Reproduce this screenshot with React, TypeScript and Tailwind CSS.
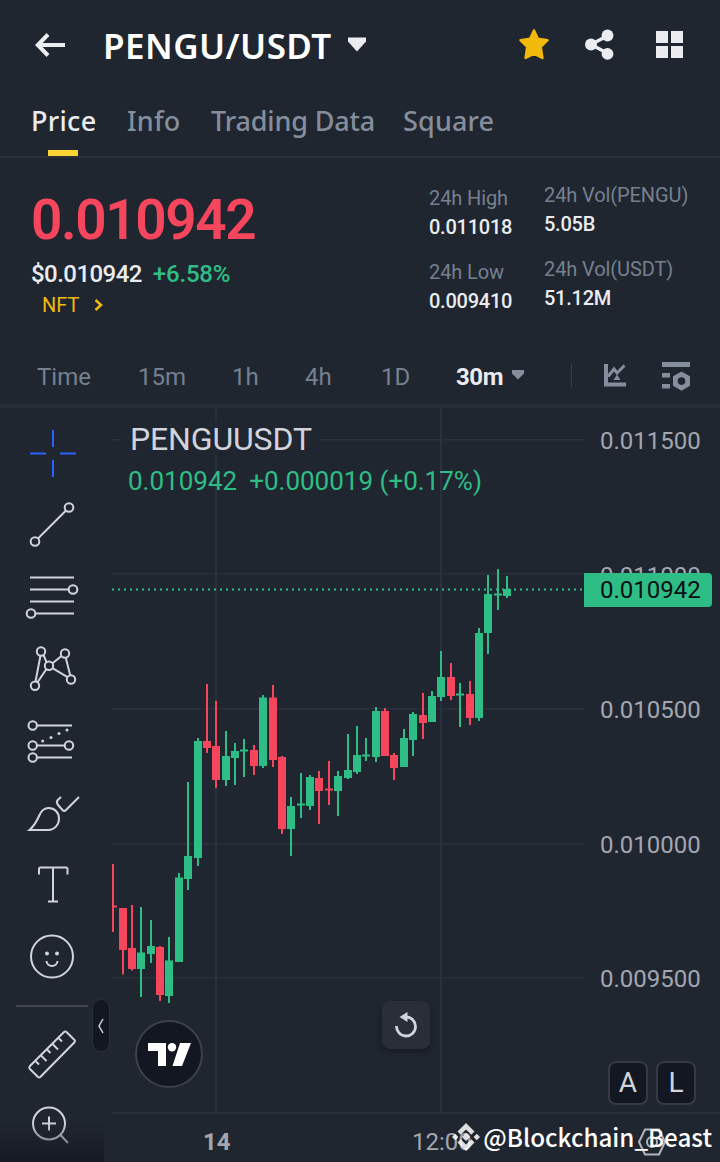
import clsx from "clsx";

interface ICandle {
  x: number;
  high: number;
  low: number;
  top: number;
  bottom: number;
  up: boolean;
}

const GREEN = "#2ebd85";
const RED = "#f6465d";

// x, high, low, body top, body bottom, up
const rawCandles: [number, number, number, number, number, boolean][] = [
  [113, 864, 932, 905.5, 907.5, false],
  [123, 908, 974.5, 908, 950, false],
  [132, 905, 970.5, 948, 969, false],
  [141, 907, 997, 952.5, 969, true],
  [151, 920, 963, 946, 954, true],
  [160, 946, 1001, 947, 995, false],
  [169, 937, 1003, 960.5, 996, true],
  [179, 873, 962, 877.5, 962, true],
  [188, 782, 890, 856, 879, true],
  [198, 738, 866, 741, 858, true],
  [207, 684, 753, 741, 748, false],
  [216, 701, 788, 746, 780, false],
  [226, 731, 786, 756, 780, true],
  [235, 743, 785, 751, 758, true],
  [244, 739, 777, 749.5, 751.5, true],
  [254, 745, 775, 750, 766, false],
  [263, 695, 768, 697.5, 766, true],
  [273, 685, 767, 697.5, 760, false],
  [282, 756, 834, 757, 829, false],
  [291, 797, 856, 806, 829, true],
  [301, 773, 818, 803.5, 805.5, true],
  [310, 775, 810, 777, 806, true],
  [319, 771, 824, 778, 791, false],
  [329, 761, 805, 788.5, 790.5, false],
  [338, 771, 816, 776, 791, true],
  [348, 734, 779, 770, 778, true],
  [357, 726, 774, 755, 772, true],
  [366, 738, 761, 754.5, 756.5, true],
  [376, 707, 762, 711, 757, true],
  [385, 708, 756, 711, 756, false],
  [394, 753, 780, 755, 768, false],
  [404, 729, 767, 738, 767, true],
  [413, 712, 756, 714, 740, true],
  [423, 693, 739, 715, 723, false],
  [432, 691, 722, 696, 722, true],
  [441, 651, 701, 677, 697, true],
  [451, 663, 700, 677, 696, false],
  [460, 683, 727, 693.5, 695.5, true],
  [470, 681, 725, 694, 718, false],
  [479, 628, 721, 633, 718, true],
  [488, 575, 654, 594, 633, true],
  [498, 569, 610, 593.5, 595.5, true],
  [507, 576, 598, 589, 596, true],
];

const candles: ICandle[] = rawCandles.map(
  ([x, high, low, top, bottom, up]) => ({ x, high, low, top, bottom, up })
);

const intervals = [
  { label: "Time", style: "w-[101px]" },
  { label: "15m", style: "w-[94px]" },
  { label: "1h", style: "w-[73px]" },
  { label: "4h", style: "w-[76px]" },
  { label: "1D", style: "w-[75px]" },
];

const Header = () => (
  <header className="flex h-[88px] items-center pl-[35px] pr-[35px]">
    <svg className="mt-px h-6 w-[30px]" viewBox="0 0 30 24" fill="none">
      <path
        d="M13 1.5 2.8 12 13 22.500M2.500 12H30"
        stroke="#eaecef"
        strokeWidth="4"
      />
    </svg>
    <h1 className="ml-[38px] w-[230px] whitespace-nowrap pt-0.5 font-['Noto_Sans'] text-[35px] font-semibold leading-none tracking-[0.450px] text-white">
      PENGU/USDT
    </h1>
    <svg className="ml-[14px] h-[15px] w-[20px]" viewBox="0 0 20 15">
      <path d="M1 0.500H19V4.500L10 14.500 1 4.500Z" fill="#eaecef" />
    </svg>
    <svg className="ml-[151px] h-8 w-8" viewBox="0 0 32 32">
      <path
        d="M16 2.500 19.900 10.800 29.500 12.200 22.700 18.800 24.400 30 16 25.600 7.600 30 9.300 18.800 2.500 12.200 12.100 10.800Z"
        fill="#f0b90b"
        stroke="#f0b90b"
        strokeWidth="2.500"
        strokeLinejoin="round"
      />
    </svg>
    <svg className="ml-[34px] h-[31px] w-[31px]" viewBox="0 0 31 31">
      <path d="M24 6.500 7 15.500 24 24.500" fill="none" stroke="#eaecef" strokeWidth="3.500" />
      <circle cx="23.500" cy="6.500" r="5.900" fill="#eaecef" />
      <circle cx="7" cy="15.500" r="6" fill="#eaecef" />
      <circle cx="23.500" cy="24.800" r="5.900" fill="#eaecef" />
    </svg>
    <div className="ml-[41px] grid w-[27px] shrink-0 grid-cols-2 gap-[3px]">
      <span className="h-3 bg-[#eaecef]" />
      <span className="h-3 bg-[#eaecef]" />
      <span className="h-3 bg-[#eaecef]" />
      <span className="h-3 bg-[#eaecef]" />
    </div>
  </header>
);

const Tabs = () => (
  <nav className="flex h-[70px] whitespace-nowrap border-b-2 border-[#2b303a] pl-[31px] font-['Noto_Sans'] text-[27px] font-medium leading-none text-[#848e9c]">
    <div className="flex w-[96px] flex-col">
      <span className="h-[62px] pt-[19px] tracking-[0.300px] text-[#eaecef]">Price</span>
      <span className="ml-[17px] h-[6px] w-[30px] bg-[#fcd535]" />
    </div>
    <span className="w-[84px] pt-[19px] tracking-[0.200px]">Info</span>
    <span className="w-[192px] pt-[19px] tracking-[-0.150px]">Trading Data</span>
    <span className="pt-[19px] tracking-[0.150px]">Square</span>
  </nav>
);

const Stat = ({ label, value }: { label: string; value: string }) => (
  <div className="flex h-[74px] flex-col gap-[9px] whitespace-nowrap leading-5">
    <span className="tracking-[-0.100px] text-[#76808f]">{label}</span>
    <span className="font-medium tracking-[-0.250px] text-[#eaecef]">{value}</span>
  </div>
);

const Ticker = () => (
  <section className="flex h-[188px] font-[Roboto]">
    <div className="w-[429px] pl-[31px] pt-[34px]">
      <div className="h-[56px] text-[55px] font-semibold leading-[56px] tracking-[-1.400px] text-[#f6465d]">
        0.010942
      </div>
      <div className="mt-[12px] flex gap-[11px] text-2xl font-medium leading-[28px] tracking-[-0.550px]">
        <span className="text-[#eaecef]">$0.010942</span>
        <span className="tracking-[-0.200px] text-[#2ebd85]">+6.58%</span>
      </div>
      <div className="ml-[11px] mt-[7px] flex items-center gap-[15px] text-xl leading-5 text-[#f0b90b]">
        NFT
        <svg className="h-3 w-[9px]" viewBox="0 0 9 12" fill="none">
          <path d="M1.500 1 7 6 1.500 11" stroke="#f0b90b" strokeWidth="2.500" />
        </svg>
      </div>
    </div>
    <div className="w-[115px] pt-[30px] text-xl">
      <Stat label="24h High" value="0.011018" />
      <Stat label="24h Low" value="0.009410" />
    </div>
    <div className="pt-[27px] text-xl">
      <Stat label="24h Vol(PENGU)" value="5.05B" />
      <Stat label="24h Vol(USDT)" value="51.12M" />
    </div>
  </section>
);

const Intervals = () => (
  <section className="flex h-[62px] items-center border-b-4 border-[#272e39] pl-[37px] pt-[3px] font-[Roboto] text-2xl text-[#76808f]">
    {intervals.map((item) => (
      <span key={item.label} className={item.style}>
        {item.label}
      </span>
    ))}
    <span className="w-[47px] font-bold tracking-[-0.400px] text-[#eaecef]">30m</span>
    <svg className="-mt-1 ml-[9px] h-[10px] w-3" viewBox="0 0 12 10">
      <path d="M0 0H12V3.500L6 9.500 0 3.500Z" fill="#848e9c" />
    </svg>
    <span className="-mt-[3px] ml-[47px] h-6 w-px bg-[#363d49]" />
    <svg className="-mt-[3px] ml-8 h-[23px] w-[22px]" viewBox="0 0 22 23" fill="none">
      <path d="M2 0V20.500H22" stroke="#848e9c" strokeWidth="4" />
      <path d="M4 12.500 10 5 13 9 20.500 1.500" stroke="#848e9c" strokeWidth="3" />
      <path d="M13 10.500 16.500 16H9.500Z" fill="#848e9c" />
    </svg>
    <svg className="-mt-[1px] ml-[36px] h-[29px] w-[28px]" viewBox="0 0 28 29" fill="#848e9c">
      <path d="M0 0H28V5H0ZM0 11H8V15.500H0ZM0 22H8V26.500H0Z" />
      <path
        fillRule="evenodd"
        d="M19.500 9.500 28 14.300V23.800L19.500 28.700 11 23.800V14.300ZM19.500 15.300A3.800 3.800 0 1 0 19.500 22.900 3.800 3.800 0 1 0 19.500 15.300Z"
      />
    </svg>
  </section>
);

const Tool = ({ children }: { children: React.ReactNode }) => (
  <div className="flex h-[72px] items-center">
    <svg
      className="h-14 w-14"
      viewBox="0 0 56 56"
      fill="none"
      stroke="#d1d4dc"
      strokeWidth="2"
    >
      {children}
    </svg>
  </div>
);

const Toolbar = () => (
  <aside className="relative w-[112px] pl-6 pt-[9px]">
    <Tool>
      <path
        d="M29 5V22M29 35V52M6 28.500H22M36 28.500H52"
        stroke="#2962ff"
      />
    </Tool>
    <Tool>
      <path d="M14 41.500 42 13.500" />
      <circle cx="11" cy="44.500" r="4.300" />
      <circle cx="45" cy="10.500" r="4.300" />
    </Tool>
    <Tool>
      <path d="M6 8.500H50M6 20.500H45M6 32.500H50M11 44.500H50" />
      <circle cx="49" cy="20.500" r="4.300" />
      <circle cx="7" cy="44.500" r="4.300" />
    </Tool>
    <Tool>
      <path d="M16.500 14.500 11.500 40.500M19.500 14 22.500 21.200M13.500 41.200 22.500 28M28.500 22.200 37.500 15M28.500 27.200 43.500 36.200M41.700 16.500 46.300 34.500" />
      <circle cx="17" cy="10.500" r="4.200" />
      <circle cx="41" cy="12.500" r="4.200" />
      <circle cx="25" cy="24.700" r="4.200" />
      <circle cx="11" cy="44.700" r="4.200" />
      <circle cx="47" cy="38.500" r="4.200" />
    </Tool>
    <Tool>
      <path d="M13 12.500H48M13 32.500H41M13 44.500H48" />
      <circle cx="8.700" cy="12.500" r="4.200" />
      <circle cx="8.700" cy="32.500" r="4.200" />
      <circle cx="45" cy="32.500" r="4.200" />
      <circle cx="8.700" cy="44.500" r="4.200" />
      <g fill="#d1d4dc" stroke="none">
        <circle cx="18.700" cy="28" r="1.500" />
        <circle cx="27" cy="24.500" r="1.500" />
        <circle cx="35" cy="20.500" r="1.500" />
        <circle cx="43" cy="17" r="1.500" />
      </g>
    </Tool>
    <Tool>
      <path d="M5.500 45C10 41 13 36 15.500 30 17.500 25.500 20.500 23 24.500 23 30.500 23 35 27.500 35 33.500 35 40 30.500 45 24 45Z" />
      <path d="M37 12 34 14.800Q31.800 17 34 20L38.500 25Q40.200 26.700 42 25L55 12" />
    </Tool>
    <Tool>
      <path d="M15 17.500V12Q15 10.500 16.500 10.500H42Q43.500 10.500 43.500 12V17.500M29 10.500V44.500M24 44.500H34" />
    </Tool>
    <Tool>
      <circle cx="28" cy="27.500" r="21" />
      <path d="M22.500 32C23 38.500 33 38.500 33.500 32" />
      <circle cx="23" cy="24.500" r="2" fill="#d1d4dc" stroke="none" />
      <circle cx="33" cy="24.500" r="2" fill="#d1d4dc" stroke="none" />
    </Tool>
    <div className="-ml-2 mb-[11px] mt-[12px] h-0.5 w-[72px] bg-[#434651]" />
    <Tool>
      <path
        d="M42.500 6 50.500 14Q51.500 15.200 50.500 16.300L16.300 51Q15.200 52 14 51L5.700 42.700Q4.700 41.500 5.700 40.300L40 6Q41.300 5 42.500 6Z"
      />
      <path d="M11.500 35 15 38.500M17 29.500 22.500 35M23 23.500 26.500 27M28.500 18 34 23.500M34.500 12 38 15.500" />
    </Tool>
    <Tool>
      <circle cx="25" cy="25.500" r="16" />
      <path d="M25 18.500V32.500M18 25.500H32M36.500 37 44 45" />
    </Tool>
    <div className="absolute bottom-0 left-0 h-10 w-[104px] bg-linear-to-b from-transparent to-[#131722]/80" />
    <div className="absolute left-[92px] top-[591px] z-10 flex h-[53px] w-[18px] items-center justify-center rounded-full border border-[#2a2e39] bg-[#131722]">
      <svg className="h-4 w-2" viewBox="0 0 8 16" fill="none">
        <path d="M6 1 2 8 6 15" stroke="#d1d4dc" strokeWidth="1.500" />
      </svg>
    </div>
  </aside>
);

const Plot = () => (
  <svg className="block h-[704px] w-[472px]" viewBox="112 408 472 704">
    <g fill="#2b313c">
      {[439, 573, 708, 843, 977].map((y) => (
        <rect key={y} x="112" y={y} width="472" height="1.500" />
      ))}
      <rect x="215" y="408" width="2" height="704" />
      <rect x="440" y="408" width="2" height="704" />
    </g>
    {candles.map((c) => (
      <g key={c.x} fill={c.up ? GREEN : RED}>
        <rect x={c.x - 1} y={c.high} width="2" height={c.low - c.high} />
        <rect x={c.x - 4} y={c.top} width="8" height={c.bottom - c.top} />
      </g>
    ))}
    <path d="M112 589.500H584" stroke={GREEN} strokeWidth="2" strokeDasharray="2 4" />
  </svg>
);

const ScaleButton = ({ label }: { label: string }) => (
  <button className="h-11 w-10 rounded-lg border-2 border-[#363a45] bg-[#131722] text-[28px] leading-none text-[#d1d4dc]">
    {label}
  </button>
);

const PriceAxis = () => (
  <div className="relative h-[704px] w-[136px] pt-[17px] text-2xl leading-8 text-[#a3a6af]">
    <div className="flex flex-col gap-[102.500px] pl-4">
      {["0.011500", "0.011000", "0.010500", "0.010000", "0.009500"].map((price) => (
        <span key={price}>{price}</span>
      ))}
    </div>
    <div className="absolute left-0 top-[165px] h-[34px] w-32 rounded-r bg-[#2ebd85] pl-4 leading-[35px] text-[#0c0e15]">
      0.010942
    </div>
    <div className="absolute left-6 top-[653px] flex gap-2">
      <ScaleButton label="A" />
      <ScaleButton label="L" />
    </div>
  </div>
);

const Legend = () => (
  <div className="absolute left-2 top-[13px] whitespace-nowrap">
    <div className="w-[200px] bg-[#202630]/70 pl-[10px] text-[32px] leading-[36px] tracking-[-0.150px] text-[#d1d4dc]">
      PENGUUSDT
    </div>
    <div className="mt-[8px] flex gap-[12px] pl-2 text-[26px] leading-[32px] text-[#2ebd85]">
      <span>0.010942</span>
      <span>+0.000019 (+0.17%)</span>
    </div>
  </div>
);

const Watermark = () => (
  <div className="absolute bottom-0 right-2 flex h-[50px] items-center gap-[3px] whitespace-nowrap font-['Noto_Sans_CJK_SC',sans-serif] text-[24.200px] font-medium text-white">
    <svg className="h-7 w-7" viewBox="0 0 28 28" fill="#fff" opacity="0.850">
      <path d="M14 0 22.500 8.500 19.300 11.700 14 6.400 8.700 11.700 5.500 8.500ZM14 28 5.500 19.500 8.700 16.300 14 21.600 19.300 16.300 22.500 19.500ZM3.200 10.800 6.400 14 3.200 17.200 0 14ZM24.800 10.800 28 14 24.800 17.200 21.600 14ZM14 10 18 14 14 18 10 14Z" />
    </svg>
    <span>@Blockchain_Beast</span>
  </div>
);

const TimeAxis = () => (
  <div className="relative flex h-[50px] items-center border-t-2 border-[#2a303b] pt-2 text-2xl leading-none text-[#a3a6af]">
    <span className="ml-[91px] w-[209px] font-bold">14</span>
    <span className="w-[226px]">12:00</span>
    <svg className="h-7 w-7" viewBox="0 0 28 28" fill="none" stroke="#b2b5be" strokeWidth="2">
      <path d="M7 1.500H21L27 14 21 26.500H7L1 14Z" />
      <circle cx="14" cy="14" r="5" />
    </svg>
    <Watermark />
  </div>
);

const Chart = () => (
  <section className="flex h-[754px] font-[Roboto]">
    <Toolbar />
    <div className="relative w-[608px]">
      <div className="flex">
        <Plot />
        <PriceAxis />
      </div>
      <TimeAxis />
      <Legend />
      <div
        className={clsx(
          "absolute left-[23px] top-[612px] flex h-[68px] w-[68px] items-center justify-center",
          "rounded-full border-2 border-[#3d414d] bg-[#131722]"
        )}
      >
        <svg className="mt-px h-[23px] w-[43px]" viewBox="0 0 43 23" fill="#fff">
          <path d="M0 0H18V23H10V8H0ZM32 0H43L34 23H24.500Z" />
          <circle cx="24" cy="4.200" r="4.200" />
        </svg>
      </div>
      <button className="absolute left-[270px] top-[593px] flex h-12 w-12 items-center justify-center rounded-lg bg-[#2a2e39] shadow-[0_3px_6px_rgba(0,0,0,0.35)]">
        <svg className="h-[26px] w-[24px]" viewBox="0 0 24 26" fill="none">
          <path d="M2.500 14A9.500 9.500 0 1 0 12 5" stroke="#d1d4dc" strokeWidth="2.800" />
          <path d="M5.500 5 13.500 0V10Z" fill="#d1d4dc" />
        </svg>
      </button>
    </div>
  </section>
);

export default function App() {
  return (
    <main className="h-[1162px] w-[720px] overflow-hidden bg-[#202630]">
      <Header />
      <Tabs />
      <Ticker />
      <Intervals />
      <Chart />
    </main>
  );
}
